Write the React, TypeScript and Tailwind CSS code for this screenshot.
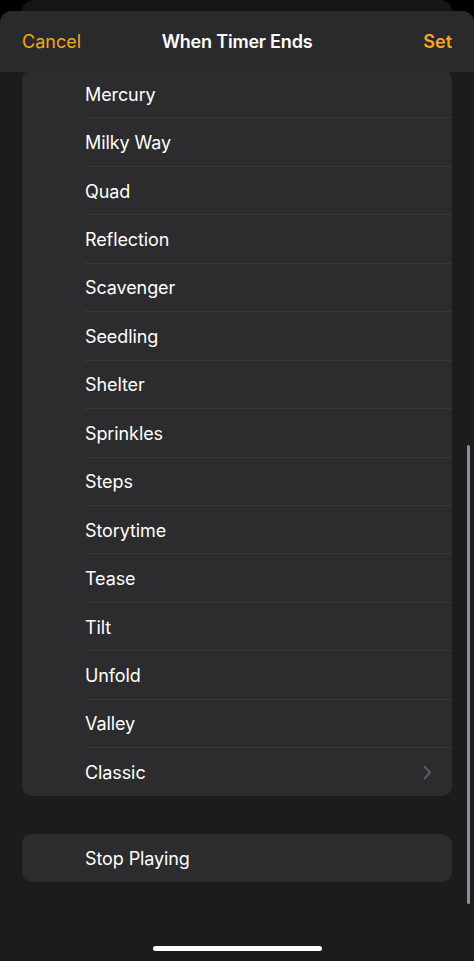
import React from "react";

const items = [
  "Mercury",
  "Milky Way",
  "Quad",
  "Reflection",
  "Scavenger",
  "Seedling",
  "Shelter",
  "Sprinkles",
  "Steps",
  "Storytime",
  "Tease",
  "Tilt",
  "Unfold",
  "Valley",
];

export default function App() {
  return (
    <div
      className="relative w-[474px] h-[961px] bg-black overflow-hidden text-white"
      style={{ fontFamily: "Inter, 'Noto Sans', sans-serif" }}
    >
      <div className="h-[11px] px-[22px]">
        <div className="h-[30px] bg-[#161618] rounded-t-[12px]" />
      </div>
      <div className="relative h-[950px] bg-[#1c1c1e] rounded-t-[12px] flex flex-col">
        <div className="relative z-10 h-[61px] bg-[#2a2a2c] rounded-t-[12px] flex items-center justify-between px-[22px]">
          <span className="text-[18px] text-[#f5a623]">Cancel</span>
          <span className="absolute left-0 right-0 text-center text-[18px] font-semibold tracking-[-0.2px] pointer-events-none">
            When Timer Ends
          </span>
          <span className="text-[18px] font-semibold text-[#f5a623]">Set</span>
        </div>
        <div className="mx-[22px] -mt-[2px] bg-[#2c2c2e] rounded-[10px] overflow-hidden">
          {items.map((name) => (
            <div key={name} className="h-[48.45px] pl-[63px] flex flex-col">
              <div className="flex-1 flex items-center pt-px text-[18px] tracking-[-0.1px]">{name}</div>
              <div className="h-px bg-[#38383a]" />
            </div>
          ))}
          <div className="h-[48px] pl-[63px] pr-[20px] flex items-center justify-between">
            <span className="text-[18px] tracking-[-0.1px]">Classic</span>
            <svg width="9" height="15" viewBox="0 0 9 15" fill="none">
              <path d="M1.5 1.5L7 7.5L1.5 13.5" stroke="#5b5b60" strokeWidth="2" strokeLinecap="round" strokeLinejoin="round" />
            </svg>
          </div>
        </div>
        <div className="mx-[22px] mt-[38px] h-[48px] bg-[#2c2c2e] rounded-[10px] pl-[63px] flex items-center pt-px">
          <span className="text-[18px] tracking-[-0.1px]">Stop Playing</span>
        </div>
        <div className="absolute right-[4px] top-[434px] w-[3px] h-[459px] rounded-full bg-[#8e8e93]" />
        <div className="absolute left-[153px] top-[935px] w-[169px] h-[5px] rounded-full bg-white" />
      </div>
    </div>
  );
}
